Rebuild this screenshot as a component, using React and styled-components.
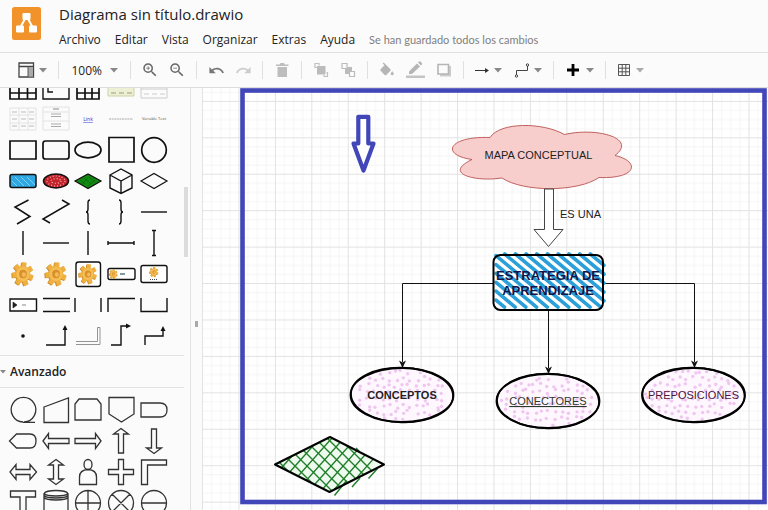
import React from 'react';
import styled, { createGlobalStyle, css } from 'styled-components';
import { MdZoomIn, MdZoomOut, MdUndo, MdRedo } from 'react-icons/md';

const GlobalStyle = createGlobalStyle`
  * {
    box-sizing: border-box;
  }
  body {
    margin: 0;
    font-family: 'Open Sans', 'Noto Sans', sans-serif;
    color: #222;
    background: #fbfbfb;
  }
  button {
    margin: 0;
    padding: 0;
    border: 0;
    background: none;
    font: inherit;
    color: inherit;
    cursor: pointer;
  }
  svg {
    display: block;
    flex-shrink: 0;
    overflow: visible;
  }
`;

const MENU = ['Archivo', 'Editar', 'Vista', 'Organizar', 'Extras', 'Ayuda'];

/* ---------- toolbar ---------- */

const Caret = ({ light }) => (
  <svg width="8" height="5" viewBox="0 0 8 5">
    <path d="M0 0h8l-4 4.6z" fill={light ? '#aaa' : '#888'} />
  </svg>
);

const Drawing = ({ size = 16, children }) => (
  <svg width={size} height="16" viewBox={`0 0 ${size} 16`} fill="none">
    {children}
  </svg>
);

const TOOLS = [
  [
    {
      label: 'Ver',
      caret: true,
      icon: (
        <Drawing>
          <path d="M1 1h14.5v14H1zM1 4.5h14.5" stroke="#444" strokeWidth="1.3" />
          <path d="M10 5h5v9.5h-5z" fill="#aaa" />
          <path d="M10 4.5v10.5" stroke="#555" />
        </Drawing>
      ),
    },
  ],
  [{ label: 'Zoom', caret: true, text: '100%', width: 48 }],
  [
    { label: 'Acercar', icon: <MdZoomIn size={18} color="#666" /> },
    { label: 'Alejar', icon: <MdZoomOut size={18} color="#666" /> },
  ],
  [
    { label: 'Deshacer', icon: <MdUndo size={17} color="#777" /> },
    { label: 'Rehacer', icon: <MdRedo size={17} color="#ccc" /> },
  ],
  [
    {
      label: 'Borrar',
      icon: (
        <Drawing>
          <path d="M2 2.5h3.5L6.5 1h3.5l1 1.5h3.5V4H2zM3.5 5h9.5v10H3.5z" fill="#bdbdbd" />
        </Drawing>
      ),
    },
  ],
  [
    {
      label: 'Traer al frente',
      icon: (
        <Drawing>
          <path d="M6 5.5H2v-4h4v2M11 13v1.5h3.5v-4h-1" stroke="#c0c0c0" strokeWidth="1.2" />
          <path d="M4 4h8.5v8.5H4z" fill="#bbb" />
        </Drawing>
      ),
    },
    {
      label: 'Enviar al fondo',
      icon: (
        <Drawing>
          <path d="M5 5h7v7H5z" fill="#bbb" />
          <path d="M2 1.5h5v5H2zM9.5 9.5h5v5h-5z" fill="#fbfbfb" stroke="#bbb" strokeWidth="1.2" />
        </Drawing>
      ),
    },
  ],
  [
    {
      label: 'Color de relleno',
      icon: (
        <svg width="18" height="18" viewBox="0 0 24 24">
          <path
            d="M16.56 10.94L7.62 2 6.21 3.41l2.38 2.38-5.15 5.15c-.59.59-.59 1.54 0 2.12l5.5 5.5c.29.29.68.44 1.06.44s.77-.15 1.06-.44l5.5-5.5c.59-.58.59-1.53 0-2.12zM19 13.5s-2 2.17-2 3.5c0 1.1.9 2 2 2s2-.9 2-2c0-1.33-2-3.5-2-3.5z"
            fill="#b5b5b5"
          />
        </svg>
      ),
    },
    {
      label: 'Color de línea',
      width: 19,
      icon: (
        <Drawing size={19}>
          <path d="M3 9.5L11 1.5l3 3-8 7.5H3z" fill="#b5b5b5" />
          <path d="M12 .5l1-1q.7-.6 1.4 0l1.5 1.5q.6.7 0 1.4l-1 1z" fill="#b5b5b5" />
          <path d="M0 13.5h19v2.5H0z" fill="#c4c4c4" />
        </Drawing>
      ),
    },
    {
      label: 'Sombra',
      icon: (
        <Drawing>
          <path d="M4 4h11v10.5H4z" fill="#ccc" />
          <path d="M2 2.5h10.5v9.5H2z" fill="#fbfbfb" stroke="#b5b5b5" strokeWidth="1.6" />
        </Drawing>
      ),
    },
  ],
  [
    {
      label: 'Conexión',
      caret: true,
      icon: (
        <Drawing size={14}>
          <path d="M0 8.5h11" stroke="#333" />
          <path d="M10 6l4 2.5-4 2.5z" fill="#333" />
        </Drawing>
      ),
    },
    {
      label: 'Puntos de paso',
      caret: true,
      icon: (
        <Drawing size={14}>
          <path d="M1.5 13V8.5h11V4" stroke="#444" />
          <circle cx="1.5" cy="14" r="1.2" stroke="#444" />
          <circle cx="12.5" cy="3" r="1.2" stroke="#444" />
        </Drawing>
      ),
    },
  ],
  [
    {
      label: 'Insertar',
      caret: true,
      icon: (
        <Drawing>
          <path d="M8 2v12M2 8h12" stroke="#000" strokeWidth="2.8" />
        </Drawing>
      ),
    },
  ],
  [
    {
      label: 'Tabla',
      caret: true,
      light: true,
      icon: (
        <Drawing size={14}>
          <path
            d="M1.5 2.5h11v11h-11zM1.5 6.2h11M1.5 9.8h11M5.2 2.5v11M8.8 2.5v11"
            stroke="#555"
          />
        </Drawing>
      ),
    },
  ],
];

/* ---------- shape library, every shape is centred on 0,0 ---------- */

const teeth = () => {
  const pts = [];
  for (let i = 0; i < 7; i++) {
    [
      [-0.34, 8],
      [-0.22, 12],
      [0.22, 12],
      [0.34, 8],
    ].forEach(([d, r]) => {
      const a = (i * Math.PI * 2) / 7 + d + 0.35;
      pts.push(`${(Math.cos(a) * r * 0.9).toFixed(2)},${(Math.sin(a) * r).toFixed(2)}`);
    });
  }
  return pts.join(' ');
};

const Gear = ({ x = 0, y = 0, scale = 1 }) => (
  <g transform={`translate(${x} ${y}) scale(${scale})`} stroke="none">
    <polygon points={teeth()} transform="translate(-1 .6)" fill="#c98a2a" />
    <polygon points={teeth()} fill="#f0b040" />
    <ellipse rx="6.5" ry="7" fill="#f5be55" />
    <ellipse rx="3.8" ry="4.2" fill="#d98f2a" />
    <ellipse cx=".8" cy=".6" rx="2" ry="2.4" fill="#f3bb5a" />
  </g>
);

const Tiny = ({ x, y, size = 4, children, ...rest }) => (
  <text x={x} y={y} fontSize={size} textAnchor="middle" fill="#777" stroke="none" {...rest}>
    {children}
  </text>
);

const GENERAL = [
  ['Tabla', <path d="M-13-12h26v23h-26zM-13 5h26M-4-12v23M4.5-12v23" />],
  ['Contenedor', <path d="M-13-12h26v23h-26zM-8-12V4h5" strokeWidth="1.4" />],
  ['Tabla con título', <path d="M-11-12h22v23h-22zM-11 5h22M-3-12v23M4-12v23" />],
  [
    'Tabla verde',
    <g strokeWidth="1">
      <path d="M-13-12h26V8h-26z" fill="#eef0d6" stroke="#cfd3a8" />
      <path d="M-10 5h5M-2 5h5M6 5h5" stroke="#9a9f72" />
    </g>,
  ],
  [
    'Tabla gris',
    <g strokeWidth="1" stroke="#ccc">
      <path d="M-13-12h26v22h-26zM-13 1h26" />
      <path d="M-10 6h5M-2 6h5M6 6h5" />
    </g>,
  ],
  [
    'Tabla 3x3',
    <g strokeWidth="1" stroke="#e2e2e2">
      <path d="M-13-11h26v22h-26zM-13-4h26M-13 4h26M-4-11v22M5-11v22" />
      <path d="M-11-7h5M-2-7h5M6-7h5M-11 0h5M-2 0h5M6 0h5M-11 7h5M-2 7h5M6 7h5" stroke="#bbb" />
    </g>,
  ],
  [
    'Lista',
    <g strokeWidth="1" stroke="#e2e2e2">
      <path d="M-13-12h26v23h-26zM-13-7h26M-13 2h26" />
      <path d="M-3-10h6" stroke="#888" />
      <path d="M-5-5h10M-5-2.5h10M-5 5h10M-5 7.5h10" stroke="#aaa" />
    </g>,
  ],
  ['Enlace', <Tiny x="0" y="2" size="5" fill="#33c" textDecoration="underline">Link</Tiny>],
  ['Separador', <path d="M-12 0h24" stroke="#aaa" strokeWidth="1" strokeDasharray="2 .6" />],
  ['Texto', <Tiny x="0" y="1" fill="#555">Variable Text</Tiny>],
  ['Rectángulo', <path d="M-13-9h26V9h-26z" />],
  ['Rectángulo redondeado', <rect x="-13" y="-9" width="26" height="18" rx="2.5" />],
  ['Elipse', <ellipse rx="13" ry="7.8" />],
  ['Cuadrado', <path d="M-12-12.5h25v24.5h-25z" />],
  ['Círculo', <circle r="12.3" />],
  [
    'Rectángulo bosquejo',
    <g>
      <rect x="-13" y="-6.5" width="26" height="13" rx="2" fill="#2fa9e4" strokeWidth="1.5" />
      <path d="M-11 0l5 5M-8-4l9 9M-2-4l9 9M4-4l8 8" stroke="#9ad5f2" strokeWidth=".8" />
    </g>,
  ],
  [
    'Elipse bosquejo',
    <g>
      <ellipse rx="12.5" ry="7" fill="#c4232b" strokeWidth="1.5" />
      <ellipse rx="9" ry="5" stroke="#f3b7b7" strokeWidth="1.2" strokeDasharray="1 2" />
      <ellipse rx="5" ry="2.3" stroke="#f3b7b7" strokeWidth="1.2" strokeDasharray="1 2" />
    </g>,
  ],
  [
    'Rombo bosquejo',
    <g>
      <path d="M-13 0L0-7 13 0 0 7.5z" fill="#118a11" strokeWidth="1.2" />
      <path d="M-8-1l5 4M-4-3l7 6M1-4l6 5M-6 3l6-6M0 5l7-6" stroke="#075a07" strokeWidth=".6" />
    </g>,
  ],
  ['Cubo', <path d="M-11-6L0-12 11-6V7L0 12.5-11 7zM-11-6L0 0 11-6M0 0v12.5" strokeWidth="1.4" />],
  ['Rombo', <path d="M-13 0L0-7.5 13 0 0 7.5z" strokeWidth="1.2" />],
  ['Curva', <path d="M5.5-12L-8-5 7 4.5-6 12" strokeWidth="1.5" />],
  ['Flecha bidireccional', <path d="M6-12l7 4L-13 7l7 4" strokeWidth="1.5" />],
  ['Llave izquierda', <path d="M2-12Q0-12 0-9v6Q0 0-2 0 0 0 0 3v6Q0 12 2 12" strokeWidth="1.4" />],
  ['Llave derecha', <path d="M-2-12Q0-12 0-9v6Q0 0 2 0 0 0 0 3v6Q0 12-2 12" strokeWidth="1.4" />],
  ['Línea horizontal', <path d="M-13 0h26" strokeWidth="1.4" />],
  ['Línea vertical', <path d="M0-12v24" strokeWidth="1.4" />],
  ['Línea', <path d="M-13 0h26" strokeWidth="1.4" />],
  ['Línea fina', <path d="M0-12v24" strokeWidth="1.4" />],
  ['Medida horizontal', <path d="M-13 0h26M-13-2v4M13-2v4" strokeWidth="1.4" />],
  ['Medida vertical', <path d="M0-12.5v25M-2-12.5h4M-2 12.5h4" strokeWidth="1.4" />],
  ['Engranaje', <Gear />],
  ['Engranaje con texto', <Gear />],
  [
    'Icono con marco',
    <g>
      <rect x="-12" y="-12" width="24.5" height="24.5" rx="2.5" fill="#fff" strokeWidth="1.4" />
      <Gear scale={0.84} />
    </g>,
  ],
  [
    'Etiqueta',
    <g>
      <rect x="-13" y="-5.5" width="27" height="11" rx="2" fill="#fff" strokeWidth="1.4" />
      <Gear x={-7.5} scale={0.4} />
      <path d="M-1 0h5" stroke="#356" strokeWidth="1.2" />
    </g>,
  ],
  [
    'Etiqueta vertical',
    <g>
      <rect x="-13" y="-8.5" width="26" height="17" rx="2" fill="#fff" strokeWidth="1.4" />
      <Gear y={-2} scale={0.42} />
      <path d="M-4 5.5h8" stroke="#444" strokeWidth="1" strokeDasharray="1 1" />
    </g>,
  ],
  [
    'Campo',
    <g>
      <path d="M-13-6h26.5V6h-26.5z" strokeWidth="1.4" fill="#fff" />
      <path d="M-10-3l4 3-4 3z" fill="#222" strokeWidth=".6" />
      <path d="M-1 0h4" stroke="#888" strokeWidth="1" />
    </g>,
  ],
  ['Bordes horizontales', <path d="M-13-6.5h27M-13 6.5h27" strokeWidth="1.4" />],
  ['Bordes verticales', <path d="M-13-7V7M13-7V7" strokeWidth="1.4" />],
  ['Borde superior', <path d="M-13 7V-6.5h27" strokeWidth="1.4" />],
  ['Borde inferior', <path d="M-13-7V6.5h26V-7" strokeWidth="1.4" />],
  ['Punto', <circle r="1.8" fill="#111" strokeWidth="0" />],
  [
    'Conector',
    <g>
      <path d="M-10 9H9V-6" strokeWidth="1.4" />
      <path d="M9-11l2.5 5h-5z" fill="#111" stroke="none" />
    </g>,
  ],
  [
    'Conector doble',
    <path d="M-12 8.5h24V-8.5H9.5v14h-21.5" stroke="#888" strokeWidth=".9" />,
  ],
  [
    'Conector en S',
    <g>
      <path d="M-10 9h10V-10h5" strokeWidth="1.4" />
      <path d="M10-10l-5-2.5v5z" fill="#111" stroke="none" />
    </g>,
  ],
  [
    'Conector en Z',
    <g>
      <path d="M-9 9V0H9v-5" strokeWidth="1.4" />
      <path d="M9-10l2.5 5h-5z" fill="#111" stroke="none" />
    </g>,
  ],
];

const ADVANCED = [
  ['Cinta', <path d="M0 12a12.3 12.3 0 1 1 1 0M0 12.3h12" />],
  ['Entrada manual', <path d="M-12-3L12.5-12v24.5H-12z" />],
  ['Límite de bucle', <path d="M-9-11H9l4 5v16h-26V-6z" />],
  ['Fuera de página', <path d="M-12-12.5h25V4L.5 12-12 4z" />],
  ['Retraso', <path d="M-13-7H6q7 0 7 7t-7 7h-19z" />],
  ['Pantalla', <path d="M-13.5 0l7-7H7q6 0 6 7t-6 7H-6.5z" />],
  ['Flecha izquierda', <path d="M-13 0l5.5-7.5v5H13v5H-7.5v5z" />],
  ['Flecha derecha', <path d="M13 0L7.5-7.5v5H-13v5H7.5v5z" />],
  ['Flecha arriba', <path d="M0-12.5l7.5 5.5h-5v19h-5V-7h-5z" />],
  ['Flecha abajo', <path d="M0 12.5L7.5 7h-5v-19h-5V7h-5z" />],
  ['Flecha horizontal', <path d="M-13 0l6-7.5v5H7v-5L13.5 0 7 7.5v-5H-7v5z" />],
  ['Flecha vertical', <path d="M0-12.5L7.5-7h-5V7h5L0 12.5-7.5 7h5V-7h-5z" />],
  [
    'Usuario',
    <g>
      <ellipse cy="-7.5" rx="4" ry="5" />
      <path d="M-8.5 12.5V5q0-7 8.5-7.5Q8.5-2 8.5 5v7.5z" />
    </g>,
  ],
  ['Cruz', <path d="M-2.5-12.5h5v10h10v5h-10v10h-5v-10h-10v-5h10z" />],
  ['Esquina', <path d="M-12.5-12H12.5v5h-19v19.5h-6z" />],
  ['T', <path d="M-12.5-12H12.5v6h-9.5v18h-6V-6h-9.5z" />],
  [
    'Almacén de datos',
    <path d="M-12-9.5V12H12V-9.5M-12-9.5Q-10-12.5 0-12.5T12-9.5Q10-7 0-7T-12-9.5zM-12-7.5Q-10-5 0-5T12-7.5M-12-5.5Q-10-3 0-3T12-5.5" />,
  ],
  ['O', <path d="M12.5 0a12.5 12.5 0 1 0-25 0 12.5 12.5 0 1 0 25 0zM0-12.5v25M-12.5 0h25" />],
  ['Suma', <path d="M12.5 0a12.5 12.5 0 1 0-25 0 12.5 12.5 0 1 0 25 0zM-9-9L9 9M9-9L-9 9" />],
  ['Elipse con línea', <path d="M12.5 0a12.5 12.5 0 1 0-25 0 12.5 12.5 0 1 0 25 0zM-12.5 0h25" />],
];

const Palette = ({ shapes, scrolled, fine }) => (
  <StyledPalette $scrolled={scrolled}>
    {shapes.map(([label, shape]) => (
      <ShapeButton key={label} type="button" aria-label={label}>
        <svg
          width="30"
          height="30"
          viewBox="-15 -15 30 30"
          fill="none"
          stroke={fine ? '#333' : '#111'}
          strokeWidth={fine ? 1.3 : 1.7}
        >
          {shape}
        </svg>
      </ShapeButton>
    ))}
  </StyledPalette>
);

/* ---------- diagram ---------- */

const scatter = (cx, cy, seed) => {
  const dots = [];
  for (let row = 0; row < 8; row++) {
    for (let col = 0; col < 15; col++) {
      const n = Math.abs(Math.sin((row * 15 + col + seed) * 12.9898) * 43758.5453) % 1;
      const m = Math.abs(Math.sin((row * 15 + col + seed) * 78.233) * 12543.123) % 1;
      const x = (col - 7) * 6.8 + n * 5 - 2;
      const y = (row - 3.5) * 6.8 + m * 5 - 2;
      if ((x / 48) ** 2 + (y / 25) ** 2 < 1) {
        dots.push(<circle key={`${row}-${col}`} cx={cx + x} cy={cy + y} r="1.7" />);
      }
    }
  }
  return dots;
};

const Concept = ({ cx, cy, seed, color, bold, underline, children }) => (
  <g>
    <ellipse cx={cx} cy={cy} rx="51" ry="27" fill="#fef8fe" />
    <g fill="#efc6f0">{scatter(cx, cy, seed)}</g>
    <g fill="none" stroke="#000">
      <ellipse cx={cx} cy={cy} rx="51.5" ry="27" strokeWidth="1.8" />
      <ellipse
        cx={cx}
        cy={cy}
        rx="51"
        ry="27.4"
        strokeWidth="1.6"
        transform={`rotate(${seed % 2 ? 2 : 1} ${cx} ${cy})`}
      />
    </g>
    <Label x={cx} y={cy + 4} $color={color} $bold={bold} $underline={underline}>
      {children}
    </Label>
  </g>
);

const stripes = () => {
  const lines = [];
  for (let i = -5; i < 11; i++) {
    const start = 494 + i * 10.7;
    const from = Math.max(0, 496 - start);
    const to = Math.min(64, 604 - start);
    if (to - from > 4) {
      lines.push(
        `M${start + from} ${254 + from * 0.83}L${start + to} ${254 + to * 0.83}`
      );
    }
  }
  return lines.join('');
};

const Arrowhead = ({ x, y }) => <path d={`M${x} ${y}l-3.5-7.5 3.5 2 3.5-2z`} fill="#111" />;

const Diagram = () => (
  <svg width="100%" height="100%" role="img" aria-label="Mapa conceptual">
    <defs>
      <pattern id="grid" x="274.9" y="100.9" width="36.43" height="36.43" patternUnits="userSpaceOnUse">
        <path
          d="M9.6 0v36.43M18.7 0v36.43M27.8 0v36.43M0 9.6h36.43M0 18.7h36.43M0 27.8h36.43"
          stroke="#f5f5f5"
        />
        <path d="M.5 0v36.43M0 .5h36.43" stroke="#e2e2e2" />
      </pattern>
      <clipPath id="rhombus">
        <path d="M275 464.5L330 437l54 27.5-54.5 27.5z" />
      </clipPath>
    </defs>
    <g transform="translate(-202 -88)" fill="none">
      <rect x="202" y="88" width="100%" height="100%" fill="url(#grid)" />

      <path
        d="M490 137.5C500 122 542 122 564.5 134.5C596 127 638 138 615 155.5C640 161 638 179 599 177.5C578 192 524 192.5 502 178C476 182 442 174 472 159.5C440 155 448 136 490 137.5Z"
        fill="#f8cecc"
        stroke="#b85450"
        strokeWidth=".9"
      />
      <Label x="538.5" y="159">MAPA CONCEPTUAL</Label>
      <path d="M544.5 189h9v40.5h9.5L548.5 246.5 534 229.5h10.5z" fill="#fff" stroke="#444" />
      <Label x="580.5" y="218">ES UNA</Label>

      <g stroke="#111">
        <path d="M493 283.5H402.5V362M604 283.5H694.5V362M548.5 310v58" />
      </g>
      <Arrowhead x={402.5} y={368} />
      <Arrowhead x={694.5} y={368} />
      <Arrowhead x={548.5} y={374} />

      <rect x="493.5" y="255" width="109.5" height="55" rx="7" fill="#fff" />
      <path d={stripes()} stroke="#2a9fd8" strokeWidth="3.6" strokeLinecap="round" />
      <rect x="493.5" y="255" width="109.5" height="55" rx="7" stroke="#000" strokeWidth="2" />
      <Label x="548" y="280" $size={13} $bold $color="#14144a">ESTRATEGIA DE</Label>
      <Label x="548" y="295" $size={13} $bold $color="#14144a">APRENDIZAJE</Label>

      <Concept cx={402} cy={395} seed={3} bold color="#222">CONCEPTOS</Concept>
      <Concept cx={548} cy={401} seed={150} underline color="#2c3a2c">CONECTORES</Concept>
      <Concept cx={693.5} cy={395} seed={377} color="#4c1440">PREPOSICIONES</Concept>

      <path d="M275 464.5L330 437l54 27.5-54.5 27.5z" fill="#effaef" />
      <g stroke="#1f7f2a" strokeWidth="1.4">
        <g clipPath="url(#rhombus)">
          <path d="M232 510l80-90M244 510l80-90M256 510l80-90M268 510l80-90M280 510l80-90M292 510l80-90M304 510l80-90M316 510l80-90M328 510l80-90" />
          <path d="M261 420l80 80M273 420l80 80M285 420l80 80M297 420l80 80M309 420l80 80M321 420l80 80M249 420l80 80M237 420l80 80" />
        </g>
        <path d="M334.5 495.5l12-15M352 487l8-9M368.5 478.5l9-10M356 448l3 3" />
      </g>
      <path d="M275 464.5L330 437l54 27.5-54.5 27.5z" stroke="#000" strokeWidth="2" strokeLinejoin="round" />

      <rect x="242.5" y="90.5" width="522" height="411.5" stroke="#4147b9" strokeWidth="4.6" />
      <path
        d="M358.3 116.8h10v26.7h5.2L363.5 170.5 353.5 143.5h4.8z"
        stroke="#4147b9"
        strokeWidth="4.2"
        strokeLinejoin="round"
        fill="#fff"
      />
    </g>
  </svg>
);

const App = () => {
  return (
    <StyledApp>
      <GlobalStyle />
      <Header>
        <svg width="29" height="33" viewBox="0 0 29 33" role="img" aria-label="draw.io">
          <rect width="29" height="33" rx="2.5" fill="#f2922b" />
          <path d="M14.5 9L8 21M14.5 9L21 21" stroke="#fff" strokeWidth="2" />
          <rect x="10.5" y="6" width="8" height="7" rx="1.2" fill="#fff" />
          <rect x="4" y="18.5" width="8" height="7" rx="1.2" fill="#fff" />
          <rect x="17" y="18.5" width="8" height="7" rx="1.2" fill="#fff" />
        </svg>
        <div>
          <Title>Diagrama sin título.drawio</Title>
          <Menu>
            {MENU.map((item) => (
              <button key={item} type="button">
                {item}
              </button>
            ))}
            <Status>Se han guardado todos los cambios</Status>
          </Menu>
        </div>
      </Header>

      <Toolbar>
        {TOOLS.map((group) => (
          <ToolGroup key={group[0].label} $wide={group.length > 1 && group[0].caret}>
            {group.map(({ label, icon, text, caret, light, width }) => (
              <ToolButton key={label} type="button" aria-label={label} $caret={caret} $width={width}>
                {icon || <span>{text}</span>}
                {caret && <Caret light={light} />}
              </ToolButton>
            ))}
          </ToolGroup>
        ))}
      </Toolbar>

      <Workspace>
        <Sidebar>
          <Library>
            <Palette shapes={GENERAL} scrolled />
            <SectionButton type="button">
              <svg width="6" height="4" viewBox="0 0 6 4">
                <path d="M0 0h6L3 3.5z" fill="#888" />
              </svg>
              Avanzado
            </SectionButton>
            <Palette shapes={ADVANCED} fine />
          </Library>
          <ScrollThumb />
        </Sidebar>
        <Splitter />
        <Canvas>
          <Diagram />
        </Canvas>
      </Workspace>
    </StyledApp>
  );
};

const StyledApp = styled.div`
  display: flex;
  flex-direction: column;
  height: 100vh;
  overflow: hidden;
`;

const Header = styled.header`
  display: flex;
  align-items: flex-start;
  gap: 18px;
  padding: 4px 12px 2px;
  border-bottom: 1px solid #e0e0e0;
  > svg {
    margin-top: 3px;
  }
`;

const Title = styled.h1`
  margin: 0 0 6px;
  font-size: 15px;
  font-weight: 400;
  line-height: 20px;
`;

const Menu = styled.nav`
  display: flex;
  align-items: center;
  gap: 14px;
  font-size: 12px;
  line-height: 20px;
`;

const Status = styled.span`
  font-family: Lato, 'Open Sans', sans-serif;
  font-size: 11px;
  color: #808080;
`;

const Toolbar = styled.div`
  display: flex;
  align-items: center;
  height: 35px;
  padding-left: 6px;
  border-bottom: 1px solid #ddd;
`;

const ToolGroup = styled.div`
  display: flex;
  align-items: center;
  height: 18px;
  gap: ${({ $wide }) => ($wide ? '13px' : '11px')};
  padding: 0 11px;
  border-left: 1px solid #e0e0e0;
  &:first-child {
    border-left-color: transparent;
  }
  &:nth-child(2) {
    padding-right: 12px;
  }
`;

const ToolButton = styled.button`
  display: flex;
  align-items: center;
  justify-content: center;
  height: 18px;
  width: ${({ $width }) => ($width ? `${$width}px` : '16px')};
  font-size: 12px;
  ${({ $caret, $width }) =>
    $caret &&
    css`
      width: ${$width ? `${$width}px` : 'auto'};
      gap: ${$width ? '8px' : '5px'};
      justify-content: flex-end;
    `};
`;

const Workspace = styled.main`
  display: flex;
  flex: 1;
  min-height: 0;
`;

const Sidebar = styled.aside`
  display: flex;
  width: 191px;
  overflow: hidden;
  border-right: 1px solid #e2e2e2;
`;

const Library = styled.div`
  flex: 1;
`;

const StyledPalette = styled.div`
  display: grid;
  grid-template-columns: repeat(5, 1fr);
  grid-auto-rows: 31px;
  padding: 6px 14px 4px 7px;
  ${({ $scrolled }) =>
    $scrolled &&
    css`
      margin-top: -22px;
    `};
`;

const ShapeButton = styled.button`
  display: flex;
  align-items: center;
  justify-content: center;
`;

const SectionButton = styled.button`
  display: flex;
  align-items: center;
  gap: 4px;
  width: 100%;
  height: 33px;
  border-top: 1px solid #e2e2e2;
  border-bottom: 1px solid #e2e2e2;
  font-size: 12px;
  font-weight: 600;
`;

const ScrollThumb = styled.div`
  width: 4px;
  height: 70px;
  margin: 99px 2px 0 0;
  background: #dcdcdc;
`;

const Splitter = styled.div`
  display: flex;
  align-items: center;
  justify-content: center;
  width: 11px;
  padding-top: 50px;
  &::after {
    content: '';
    width: 3px;
    height: 6px;
    background: #aaa;
  }
`;

const Canvas = styled.section`
  flex: 1;
  min-width: 0;
  background: #fff;
  overflow: hidden;
`;

const Label = styled.text`
  font-family: 'Liberation Sans', Arial, sans-serif;
  font-size: ${({ $size }) => $size || 11}px;
  font-weight: ${({ $bold }) => ($bold ? 700 : 400)};
  text-anchor: middle;
  text-decoration: ${({ $underline }) => ($underline ? 'underline' : 'none')};
  text-decoration-skip-ink: none;
  text-underline-offset: 3px;
  fill: ${({ $color }) => $color || '#222'};
`;

export default App;
